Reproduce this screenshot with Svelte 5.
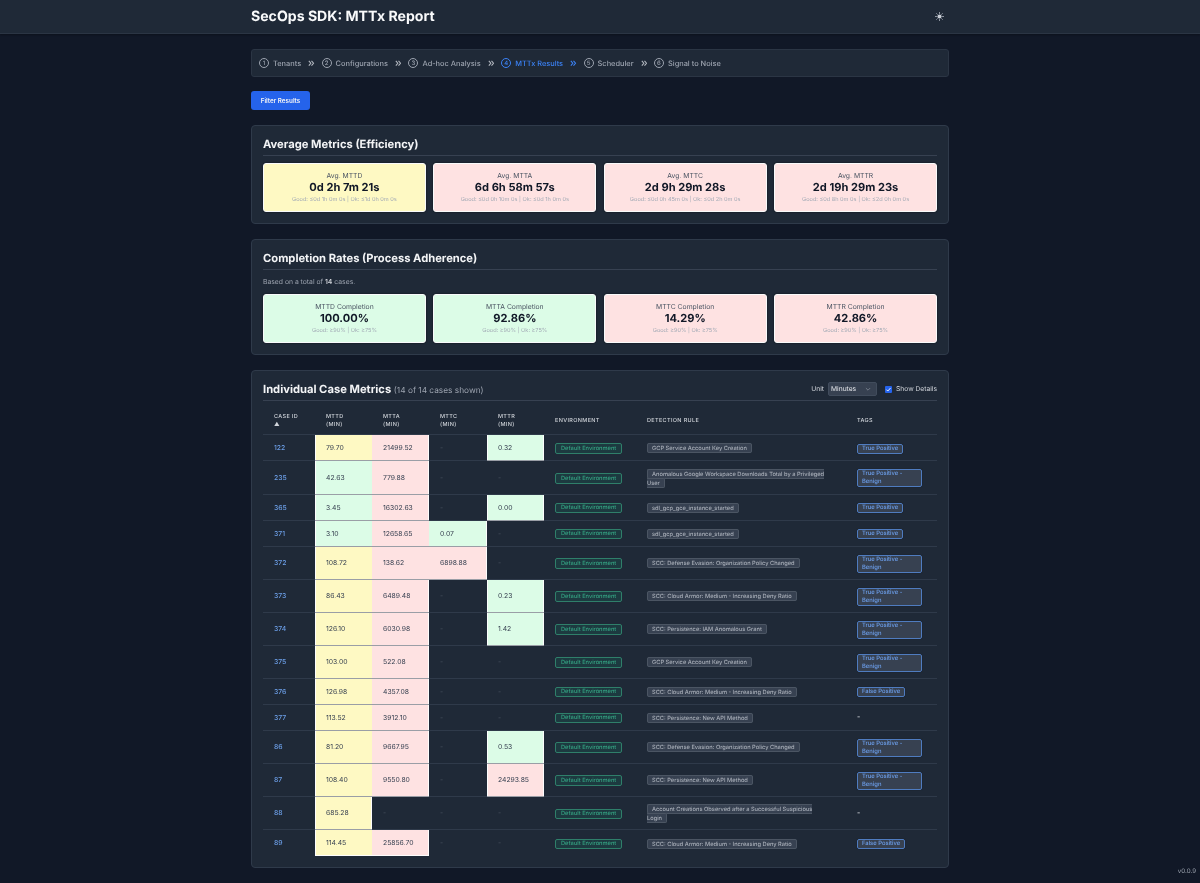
<script>
	const steps = [
		{ n: 1, name: 'Tenants' },
		{ n: 2, name: 'Configurations' },
		{ n: 3, name: 'Ad-hoc Analysis' },
		{ n: 4, name: 'MTTx Results', active: true },
		{ n: 5, name: 'Scheduler' },
		{ n: 6, name: 'Signal to Noise' }
	];

	const averages = [
		{ label: 'Avg. MTTD', value: '0d 2h 7m 21s', note: 'Good: ≤0d 1h 0m 0s | Ok: ≤1d 0h 0m 0s', tone: 'yellow' },
		{ label: 'Avg. MTTA', value: '6d 6h 58m 57s', note: 'Good: ≤0d 0h 10m 0s | Ok: ≤0d 1h 0m 0s', tone: 'red' },
		{ label: 'Avg. MTTC', value: '2d 9h 29m 28s', note: 'Good: ≤0d 0h 45m 0s | Ok: ≤0d 2h 0m 0s', tone: 'red' },
		{ label: 'Avg. MTTR', value: '2d 19h 29m 23s', note: 'Good: ≤0d 8h 0m 0s | Ok: ≤2d 0h 0m 0s', tone: 'red' }
	];

	const rates = [
		{ label: 'MTTD Completion', value: '100.00%', note: 'Good: ≥90% | Ok: ≥75%', tone: 'green' },
		{ label: 'MTTA Completion', value: '92.86%', note: 'Good: ≥90% | Ok: ≥75%', tone: 'green' },
		{ label: 'MTTC Completion', value: '14.29%', note: 'Good: ≥90% | Ok: ≥75%', tone: 'red' },
		{ label: 'MTTR Completion', value: '42.86%', note: 'Good: ≥90% | Ok: ≥75%', tone: 'red' }
	];

	const TP = 'True Positive';
	const TPB = 'True Positive - Benign';
	const FP = 'False Positive';

	const cases = [
		{ id: '122', d: ['79.70', 'y'], a: ['21499.52', 'r'], c: null, r: ['0.32', 'g'], rule: 'GCP Service Account Key Creation', tag: TP },
		{ id: '235', d: ['42.63', 'g'], a: ['779.88', 'r'], c: null, r: null, rule: 'Anomalous Google Workspace Downloads Total by a Privileged User', tag: TPB },
		{ id: '365', d: ['3.45', 'g'], a: ['16302.63', 'r'], c: null, r: ['0.00', 'g'], rule: 'sdl_gcp_gce_instance_started', tag: TP },
		{ id: '371', d: ['3.10', 'g'], a: ['12658.65', 'r'], c: ['0.07', 'g'], r: null, rule: 'sdl_gcp_gce_instance_started', tag: TP },
		{ id: '372', d: ['108.72', 'y'], a: ['138.62', 'r'], c: ['6898.88', 'r'], r: null, rule: 'SCC: Defense Evasion: Organization Policy Changed', tag: TPB },
		{ id: '373', d: ['86.43', 'y'], a: ['6489.48', 'r'], c: null, r: ['0.23', 'g'], rule: 'SCC: Cloud Armor: Medium - Increasing Deny Ratio', tag: TPB },
		{ id: '374', d: ['126.10', 'y'], a: ['6030.98', 'r'], c: null, r: ['1.42', 'g'], rule: 'SCC: Persistence: IAM Anomalous Grant', tag: TPB },
		{ id: '375', d: ['103.00', 'y'], a: ['522.08', 'r'], c: null, r: null, rule: 'GCP Service Account Key Creation', tag: TPB },
		{ id: '376', d: ['126.98', 'y'], a: ['4357.08', 'r'], c: null, r: null, rule: 'SCC: Cloud Armor: Medium - Increasing Deny Ratio', tag: FP },
		{ id: '377', d: ['113.52', 'y'], a: ['3912.10', 'r'], c: null, r: null, rule: 'SCC: Persistence: New API Method', tag: null },
		{ id: '86', d: ['81.20', 'y'], a: ['9667.95', 'r'], c: null, r: ['0.53', 'g'], rule: 'SCC: Defense Evasion: Organization Policy Changed', tag: TPB },
		{ id: '87', d: ['108.40', 'y'], a: ['9550.80', 'r'], c: null, r: ['24293.85', 'r'], rule: 'SCC: Persistence: New API Method', tag: TPB },
		{ id: '88', d: ['685.28', 'y'], a: null, c: null, r: null, rule: 'Account Creations Observed after a Successful Suspicious Login', tag: null },
		{ id: '89', d: ['114.45', 'y'], a: ['25856.70', 'r'], c: null, r: null, rule: 'SCC: Cloud Armor: Medium - Increasing Deny Ratio', tag: FP }
	];

	const columns = ['d', 'a', 'c', 'r'];

	// white edge only where a coloured run of cells starts or stops
	function edges(row, i) {
		let cls = '';
		if (!row[columns[i - 1]]) cls += ' edge-l';
		if (!row[columns[i + 1]]) cls += ' edge-r';
		return cls;
	}
</script>

<header class="topbar">
	<div class="topbar-inner">
		<h1>SecOps SDK: MTTx Report</h1>
		<svg class="sun" viewBox="0 0 24 24" width="9" height="9" aria-hidden="true">
			<circle cx="12" cy="12" r="5.5" fill="#c9ced6" />
			<g stroke="#9ca3af" stroke-width="2.4" stroke-linecap="round">
				<path d="M12 1v3M12 20v3M1 12h3M20 12h3M4.200 4.200l2.100 2.100M17.700 17.700l2.100 2.100M4.200 19.800l2.100-2.100M17.700 6.300l2.100-2.100" />
			</g>
		</svg>
	</div>
</header>

<main class="page">
	<nav class="steps">
		{#each steps as step, i}
			{#if i > 0}
				<svg class="chev" class:lit={steps[i - 1].active} viewBox="0 0 8 8" width="6.500" height="6.500" aria-hidden="true">
					<path d="M1 1l2.500 3L1 7M4.300 1l2.500 3-2.500 3" />
				</svg>
			{/if}
			<span class="step" class:active={step.active}>
				<span class="num">{step.n}</span>
				{step.name}
			</span>
		{/each}
	</nav>

	<button class="filter">Filter Results</button>

	<section class="panel">
		<h2>Average Metrics (Efficiency)</h2>
		<div class="metrics">
			{#each averages as m}
				<div class="metric {m.tone}">
					<div class="m-label">{m.label}</div>
					<div class="m-value">{m.value}</div>
					<div class="m-note">{m.note}</div>
				</div>
			{/each}
		</div>
	</section>

	<section class="panel">
		<h2>Completion Rates (Process Adherence)</h2>
		<p class="based">Based on a total of <strong>14</strong> cases.</p>
		<div class="metrics">
			{#each rates as m}
				<div class="metric {m.tone}">
					<div class="m-label">{m.label}</div>
					<div class="m-value">{m.value}</div>
					<div class="m-note">{m.note}</div>
				</div>
			{/each}
		</div>
	</section>

	<section class="panel table-panel">
		<div class="table-head">
			<h2>Individual Case Metrics <small>(14 of 14 cases shown)</small></h2>
			<div class="controls">
				<span class="unit">Unit</span>
				<span class="select">Minutes
					<svg viewBox="0 0 10 10" width="6" height="6" aria-hidden="true"><path d="M1.500 3.500L5 7l3.500-3.500" /></svg>
				</span>
				<span class="check">
					<svg viewBox="0 0 10 10" width="7" height="7" aria-hidden="true"><path d="M2 5.200l2 2 4-4.400" /></svg>
				</span>
				<span class="show">Show Details</span>
			</div>
		</div>

		<table>
			<colgroup>
				<col style="width:52px" />
				<col style="width:57px" />
				<col style="width:57px" />
				<col style="width:58px" />
				<col style="width:57px" />
				<col style="width:92px" />
				<col style="width:210px" />
				<col style="width:91px" />
			</colgroup>
			<thead>
				<tr>
					<th>Case ID<br />▲</th>
					<th>MTTD<br />(min)</th>
					<th>MTTA<br />(min)</th>
					<th>MTTC<br />(min)</th>
					<th>MTTR<br />(min)</th>
					<th>Environment</th>
					<th>Detection Rule</th>
					<th>Tags</th>
				</tr>
			</thead>
			<tbody>
				{#each cases as row}
					<tr>
						<td class="case-id">{row.id}</td>
						{#each columns as key, i}
							{#if row[key]}
								<td class="num-cell {row[key][1]}{edges(row, i)}">{row[key][0]}</td>
							{:else}
								<td class="empty">-</td>
							{/if}
						{/each}
						<td class="pill-cell"><span class="env">Default Environment</span></td>
						<td class="rule-cell"><span class="rule">{row.rule}</span></td>
						<td class="pill-cell">
							{#if row.tag}
								<span class="tag">{row.tag}</span>
							{:else}
								<span class="no-tag">-</span>
							{/if}
						</td>
					</tr>
				{/each}
			</tbody>
		</table>
	</section>
</main>

<div class="version">v0.0.9</div>

<style>
	:global(body) {
		background: #111827;
		color: #f3f4f6;
		font-family: Inter, "Liberation Sans", sans-serif;
		text-rendering: geometricPrecision;
	}

	.topbar {
		background: #1f2937;
		border-bottom: 1px solid #2b3544;
		height: 33px;
		box-shadow: 0 1px 2px rgba(0, 0, 0, 0.3);
		will-change: transform;
	}

	.topbar-inner {
		width: 698px;
		height: 100%;
		margin: 0 auto;
		display: flex;
		align-items: center;
		justify-content: space-between;
		padding-right: 5.500px;
		box-sizing: border-box;
	}

	h1 {
		margin: 0;
		font-size: 14.100px;
		font-weight: 700;
		color: #f9fafb;
	}

	.page {
		width: 698px;
		margin: 0 auto;
		padding: 15px 0 15px;
		will-change: transform;
	}

	.steps {
		display: flex;
		align-items: center;
		gap: 7px;
		height: 26px;
		padding: 0 7px;
		background: #1f2937;
		border: 1px solid #2b3544;
		border-radius: 3px;
	}

	.step {
		display: flex;
		align-items: center;
		gap: 4px;
		font-size: 7.400px;
		font-weight: 500;
		color: #9ca3af;
		white-space: nowrap;
	}

	.step.active {
		color: #3b82f6;
	}

	.num {
		width: 10px;
		height: 10px;
		box-sizing: border-box;
		border: 0.600px solid currentColor;
		border-radius: 50%;
		display: flex;
		align-items: center;
		justify-content: center;
		font-size: 6px;
	}

	.chev path {
		fill: none;
		stroke: #b4b9c1;
		stroke-width: 1.300;
	}

	.chev.lit path {
		stroke: #3b82f6;
	}

	.filter {
		display: block;
		margin: 14px 0 15px;
		width: 59px;
		height: 19px;
		padding: 0;
		border: none;
		border-radius: 3px;
		background: #2563eb;
		color: #f3f4f6;
		font: 600 6.300px Inter, sans-serif;
	}

	.panel {
		background: #1f2937;
		border: 1px solid #2f3a4a;
		border-radius: 4px;
		padding: 11px;
		margin-bottom: 15px;
	}

	h2 {
		margin: 0 0 7px;
		padding-bottom: 3px;
		border-bottom: 1px solid #374151;
		font-size: 11.200px;
		line-height: 15px;
		font-weight: 700;
		color: #f3f4f6;
	}

	.metrics {
		display: grid;
		grid-template-columns: repeat(4, 1fr);
		gap: 7.500px;
	}

	.metric {
		height: 49px;
		box-sizing: border-box;
		border: 1px solid #f9fafb;
		border-radius: 3px;
		box-shadow: 0 0 2px rgba(0, 0, 0, 0.6);
		text-align: center;
		color: #111827;
		padding-top: 7px;
	}

	.yellow { background: #fef9c3; }
	.red { background: #fee2e2; }
	.green { background: #dcfce7; }

	.m-label {
		font-size: 6.800px;
		line-height: 9px;
		color: #4b5563;
	}

	.m-value {
		font-size: 11.100px;
		line-height: 15px;
		font-weight: 700;
	}

	.m-note {
		margin-top: 2px;
		font-size: 5.600px;
		line-height: 7px;
		color: #a2aab5;
	}

	.based {
		margin: 0 0 8px;
		font-size: 6.800px;
		line-height: 9px;
		color: #9ca3af;
	}

	.based strong {
		font-weight: 600;
		color: #d1d5db;
	}

	.table-panel {
		margin-bottom: 0;
	}

	.table-head {
		display: flex;
		align-items: flex-start;
		justify-content: space-between;
		border-bottom: 1px solid #374151;
		height: 18px;
	}

	.table-head h2 {
		margin: 0;
		padding: 0;
		border: none;
		font-size: 11.200px;
	}

	small {
		font-size: 8.300px;
		font-weight: 400;
		color: #9ca3af;
	}

	.controls {
		display: flex;
		align-items: center;
		font-size: 6.700px;
		color: #d1d5db;
	}

	.select {
		width: 49px;
		height: 14px;
		box-sizing: border-box;
		margin-left: 4px;
		padding: 0 5px 0 2px;
		display: flex;
		align-items: center;
		justify-content: space-between;
		background: #374151;
		border: 1px solid #414c5c;
		border-radius: 2px;
		color: #e5e7eb;
	}

	.select path {
		fill: none;
		stroke: #9ca3af;
		stroke-width: 1;
	}

	.check {
		width: 7px;
		height: 7px;
		margin: 0 4px 0 8px;
		background: #2563eb;
		border-radius: 1px;
		display: flex;
	}

	.check path {
		fill: none;
		stroke: #fff;
		stroke-width: 1.300;
	}

	table {
		width: 674px;
		margin-top: 7px;
		table-layout: fixed;
		border-collapse: collapse;
		font-size: 6.800px;
	}

	th {
		height: 26px;
		padding: 0 11px;
		text-align: left;
		vertical-align: middle;
		font-size: 5.500px;
		line-height: 8px;
		font-weight: 500;
		letter-spacing: 0.350px;
		text-transform: uppercase;
		color: #d1d5db;
		border-bottom: 1px solid #2f3a4a;
	}

	td {
		padding: 7px 11px;
		vertical-align: middle;
		line-height: 11px;
		border-bottom: 1px solid #2f3a4a;
		color: #d1d5db;
	}

	tbody tr:last-child td {
		border-bottom: none;
	}

	.case-id {
		color: #6c9fe8;
		font-size: 6.800px;
		font-weight: 500;
	}

	.num-cell {
		position: relative;
		color: #374151;
		border-bottom-color: #9a9ea6;
	}

	.num-cell.edge-l {
		box-shadow: inset 1px 0 #fdfdfd, -1px 0 #111827;
	}

	.num-cell.edge-r {
		box-shadow: inset -1px 0 #fdfdfd, 1px 0 #111827;
	}

	.num-cell.edge-l.edge-r {
		box-shadow: inset 1px 0 #fdfdfd, inset -1px 0 #fdfdfd, -1px 0 #111827, 1px 0 #111827;
	}

	tbody tr:last-child .num-cell {
		border-bottom: 1px solid #fdfdfd;
	}

	.num-cell.y { background: #fef9c3; }
	.num-cell.r { background: #fee2e2; }
	.num-cell.g { background: #dcfce7; }

	.empty {
		color: #4b5563;
	}

	.pill-cell {
		line-height: 0;
	}

	.env {
		display: inline-block;
		vertical-align: middle;
		margin: 1px 0 -1px;
		white-space: nowrap;
		padding: 0.500px 5px;
		font-size: 5.700px;
		line-height: 7.500px;
		font-weight: 500;
		color: #34a382;
		background: rgba(16, 185, 129, 0.12);
		border: 1px solid #2f7f6a;
		border-radius: 2px;
	}

	.rule {
		padding: 0.500px 4px;
		font-weight: 500;
		color: #a8aeb8;
		background: #374151;
		border: 1px solid #4b5563;
		border-radius: 2px;
	}

	.rule-cell {
		padding: 8px 19px 6px 11px;
		font-size: 5.700px;
		line-height: 9.300px;
	}

	.tag {
		display: inline-block;
		vertical-align: middle;
		margin: 1px 0 -1px;
		box-sizing: border-box;
		max-width: 65px;
		padding: 0 4px;
		font-size: 5.850px;
		font-weight: 500;
		line-height: 8px;
		color: #6da0ee;
		background: #374151;
		border: 1px solid #4f7cc0;
		border-radius: 2px;
		box-shadow: 0 0 1px rgba(0, 0, 0, 0.6);
	}

	.no-tag {
		color: #d1d5db;
		font-size: 7px;
		font-weight: 600;
	}

	.version {
		position: fixed;
		right: 4px;
		bottom: 8px;
		font-size: 6.200px;
		color: #9ca3af;
	}
</style>
